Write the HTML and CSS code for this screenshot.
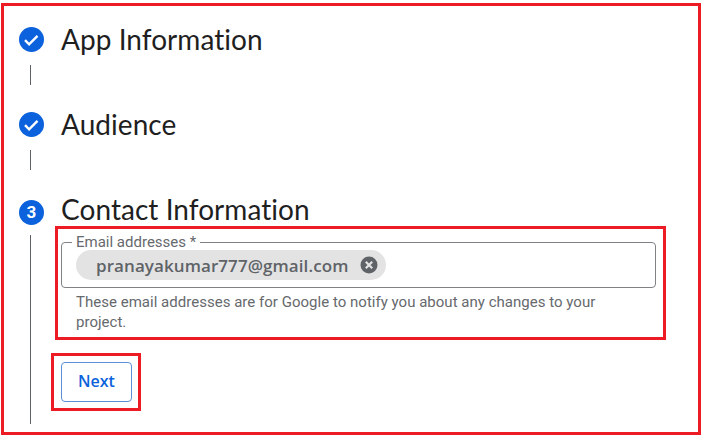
FILE: index.html
```html
<!DOCTYPE html>
<html lang="en">
  <head>
    <meta charset="UTF-8" />
    <meta name="viewport" content="width=device-width, initial-scale=1.0" />
    <title>Contact Information</title>
    <link rel="stylesheet" href="styles.css">
  </head>
  <body>
    <div class="stepper-frame">
      <div class="step-head">
        <svg class="step-icon" viewBox="0 0 25 25">
          <circle cx="12.5" cy="12.5" r="12.5" fill="#0b62dc" />
          <path d="M6 13.2l4.1 4.1 8.4-8.4" fill="none" stroke="#fff" stroke-width="2.4" />
        </svg>
        <h2>App Information</h2>
      </div>
      <div class="step-line"></div>

      <div class="step-head">
        <svg class="step-icon" viewBox="0 0 25 25">
          <circle cx="12.5" cy="12.5" r="12.5" fill="#0b62dc" />
          <path d="M6 13.2l4.1 4.1 8.4-8.4" fill="none" stroke="#fff" stroke-width="2.4" />
        </svg>
        <h2>Audience</h2>
      </div>
      <div class="step-line"></div>

      <div class="step-head">
        <div class="step-number">3</div>
        <h2>Contact Information</h2>
      </div>
      <div class="step-body">
        <div class="body-line"></div>
        <div class="body-content">
          <div class="field-box">
            <fieldset class="email-field">
              <legend>Email addresses *</legend>
              <div class="chip">
                <span>pranayakumar777@gmail.com</span>
                <svg class="chip-close" viewBox="0 0 18 18">
                  <circle cx="9" cy="9" r="8.5" fill="#5f6368" />
                  <path d="M5.8 5.8l6.4 6.4M12.2 5.8l-6.4 6.4" fill="none" stroke="#e3e3e3" stroke-width="2.2" />
                </svg>
              </div>
            </fieldset>
            <p class="helper">These email addresses are for Google to notify you about any changes to your project.</p>
          </div>
          <div class="next-box">
            <button class="next-btn">Next</button>
          </div>
        </div>
      </div>
    </div>
  </body>
</html>
```

FILE: styles.css
```css
* {
  margin: 0;
  padding: 0;
  box-sizing: border-box;
}

body {
  background: white;
  font-family: Roboto, sans-serif;
  overflow: hidden;
}

.stepper-frame {
  width: 700px;
  height: 432px;
  margin: 3px 0 0 1px;
  border: 3px solid #ed1c24;
  padding: 21px 0 0 15px;
}

.step-head {
  display: flex;
  align-items: center;
  gap: 17px;
  height: 25px;
}

.step-head h2 {
  margin-bottom: 2px;
  font-family: Lato, sans-serif;
  font-size: 28px;
  font-weight: 400;
  letter-spacing: 0.05px;
  color: #1f1f1f;
  white-space: nowrap;
}

.step-icon {
  width: 25px;
  height: 25px;
  flex: none;
}

.step-number {
  width: 25px;
  height: 25px;
  flex: none;
  margin-top: 5px;
  border-radius: 50%;
  background: #0b62dc;
  color: white;
  font-size: 17px;
  font-weight: 700;
  line-height: 25px;
  text-align: center;
}

.step-line {
  width: 1px;
  height: 20px;
  margin: 13px 0 27px 11px;
  background: #5f6368;
}

.step-body {
  display: flex;
  margin-top: 4px;
}

.body-line {
  width: 1px;
  height: 189px;
  flex: none;
  margin: 9px 0 0 11px;
  background: #5f6368;
}

.body-content {
  margin-left: 20px;
}

.field-box {
  width: 611px;
  margin-left: 4px;
  border: 3px solid #ed1c24;
  padding: 5px 7px 5px 3px;
}

.email-field {
  height: 54px;
  border: 1px solid #7f8185;
  border-radius: 4px;
  padding: 0 14px;
}

.email-field legend {
  margin-left: -4px;
  padding: 0 4px;
  font-size: 15px;
  line-height: 17px;
  color: #66696d;
}

.chip {
  display: inline-flex;
  align-items: center;
  gap: 12px;
  height: 30px;
  margin-top: -1px;
  padding: 0 8px 0 20px;
  border-radius: 15px;
  background: #e3e3e3;
  font-family: "Open Sans", sans-serif;
  font-size: 17px;
  font-weight: 600;
  letter-spacing: 0.08px;
  color: #5f6368;
}

.chip-close {
  width: 18px;
  height: 18px;
}

.helper {
  max-width: 540px;
  margin: 4px 0 0 15px;
  font-size: 15px;
  line-height: 20px;
  letter-spacing: 0.02px;
  color: #66696d;
}

.next-box {
  width: 90px;
  margin-top: 13px;
  border: 3px solid #ed1c24;
  padding: 6px 6px 6px 7px;
}

.next-btn {
  display: block;
  width: 71px;
  height: 40px;
  padding-bottom: 2px;
  border: 1px solid #5b8fd8;
  border-radius: 4px;
  background: white;
  color: #0b62dc;
  font-family: "Open Sans", sans-serif;
  font-size: 16px;
  font-weight: 600;
}
```
